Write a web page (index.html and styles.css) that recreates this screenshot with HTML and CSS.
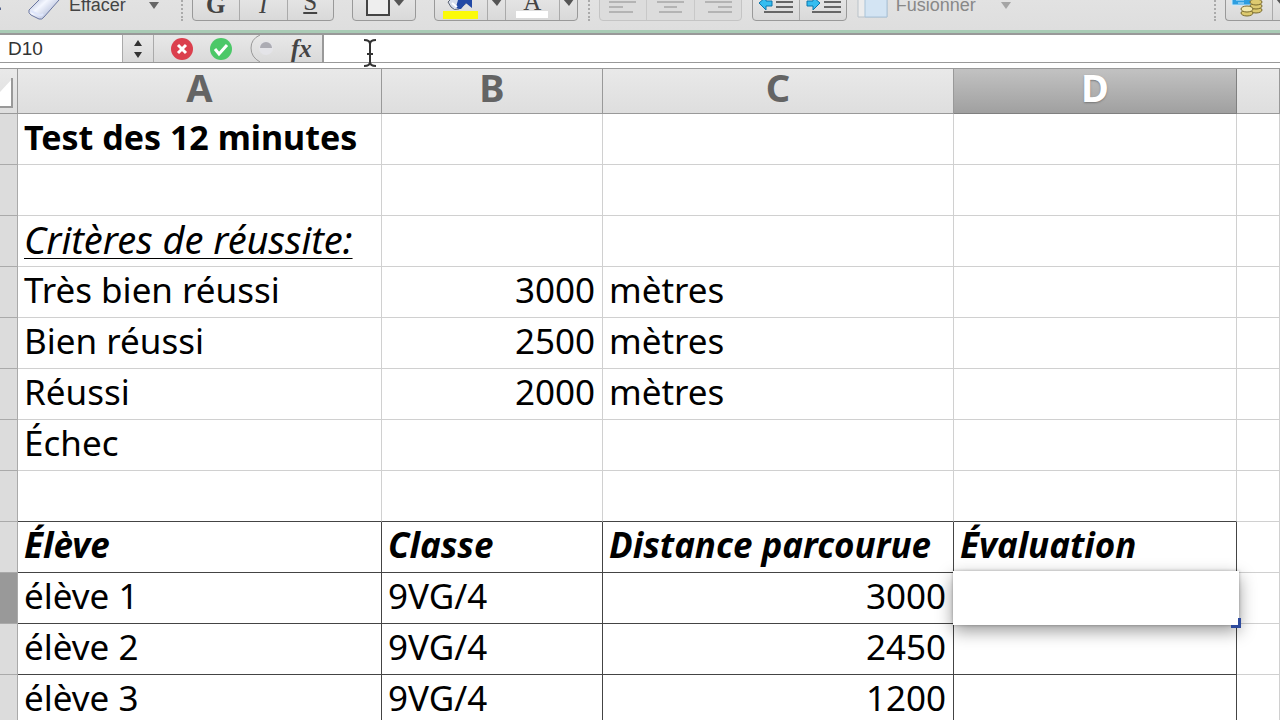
FILE: index.html
```html
<!DOCTYPE html>
<html lang="fr">
<head>
    <meta charset="UTF-8">
    <meta name="viewport" content="width=device-width, initial-scale=1.0">
    <title>Test des 12 minutes</title>
    <link rel="stylesheet" href="styles.css">
</head>
<body>

    <!-- Toolbar -->
    <div class="toolbar">
        <button class="tool clear" type="button">
            <svg width="64" height="32" viewBox="0 -11 64 32">
                <defs>
                    <linearGradient id="eraser" x1="0" y1="0" x2="1" y2="1">
                        <stop offset="0" stop-color="#8794bd"/>
                        <stop offset="0.45" stop-color="#f4f7ff"/>
                        <stop offset="1" stop-color="#8f9cc4"/>
                    </linearGradient>
                </defs>
                <path d="M0 7l1 1v2H0z" fill="#56648e"/>
                <path d="M29 10L46-7q3-3 7 0l6 3q2 2 0 4L44 17q-2 3-5 2l-8-4q-3-2-2-5z" fill="url(#eraser)" stroke="#6a76a0"/>
                <path d="M31 11l8 4q2 1 4-1" fill="none" stroke="#dfe6fb" stroke-width="2"/>
            </svg>
            <span>Effacer</span>
            <span class="arrow"></span>
        </button>
        <span class="dots"></span>
        <div class="group">
            <button class="tool letter w-46" type="button"><b>G</b></button>
            <button class="tool letter w-48" type="button"><i>I</i></button>
            <button class="tool letter w-46 underlined" type="button"><u>S</u></button>
        </div>
        <div class="group borders">
            <button class="tool" type="button" aria-label="Bordures">
                <svg width="62" height="32" viewBox="0 -11 62 32">
                    <path d="M14-9h22v24H14z" fill="#eee" stroke="#444" stroke-width="2"/>
                    <path d="M41 0h10l-5 6z" fill="#555"/>
                </svg>
            </button>
        </div>
        <div class="group colors">
            <button class="tool" type="button" aria-label="Remplissage">
                <svg width="52" height="32" viewBox="0 -11 52 32">
                    <path d="M13 2l10-10 11 9-10 8q-5 2-8-2z" fill="#d5dceb" stroke="#5d6574"/>
                    <path d="M23 0l5-8q9 2 9 7v9q-5-4-6-5l-5 6q-4 0-5-2z" fill="#2249a6"/>
                    <path d="M17 3l5 4" stroke="#fff" stroke-width="2"/>
                    <path d="M8 11h35v8H8z" fill="#fbfa0a"/>
                </svg>
            </button>
            <button class="tool" type="button" aria-label="Choisir le remplissage">
                <svg width="17" height="32" viewBox="0 -11 17 32"><path d="M3-1h11L9 6z" fill="#555"/></svg>
            </button>
            <button class="tool letter w-54 font-color" type="button">A</button>
            <button class="tool" type="button" aria-label="Choisir la couleur">
                <svg width="17" height="32" viewBox="0 -11 17 32"><path d="M3-1h11L9 6z" fill="#555"/></svg>
            </button>
        </div>
        <span class="dots"></span>
        <div class="group pale">
            <button class="tool" type="button" aria-label="Gauche">
                <svg width="46" height="32" viewBox="0 -11 46 32"><path d="M9 2h27M9 7h14M9 12h24" stroke="#b4b4b4" stroke-width="2"/></svg>
            </button>
            <button class="tool" type="button" aria-label="Centrer">
                <svg width="47" height="32" viewBox="0 -11 47 32"><path d="M10 2h27M17 7h13M12 12h23" stroke="#b4b4b4" stroke-width="2"/></svg>
            </button>
            <button class="tool" type="button" aria-label="Droite">
                <svg width="46" height="32" viewBox="0 -11 46 32"><path d="M10 2h27M23 7h14M13 12h24" stroke="#b4b4b4" stroke-width="2"/></svg>
            </button>
        </div>
        <div class="group">
            <button class="tool" type="button" aria-label="Diminuer le retrait">
                <svg width="46" height="32" viewBox="0 -11 46 32">
                    <path d="M23 2h17M23 7h17M11 12h29" stroke="#666" stroke-width="2"/>
                    <path d="M6 3l7-6v4h6v5h-6v4z" fill="#35bdf0" stroke="#0b76ad"/>
                </svg>
            </button>
            <button class="tool" type="button" aria-label="Augmenter le retrait">
                <svg width="46" height="32" viewBox="0 -11 46 32">
                    <path d="M24 2h17M24 7h17M12 12h29" stroke="#666" stroke-width="2"/>
                    <path d="M20 3l-7-6v4H7v5h6v4z" fill="#35bdf0" stroke="#0b76ad"/>
                </svg>
            </button>
        </div>
        <button class="tool merge" type="button">
            <svg width="32" height="32" viewBox="0 -11 32 32">
                <path d="M1-8h29v25H1z" fill="#ececec" stroke="#b9c2c9"/>
                <path d="M8-8h22v25H8z" fill="#d3e4f3" stroke="#a9c3d8"/>
            </svg>
            <span>Fusionner</span>
            <span class="arrow"></span>
        </button>
        <span class="dots last"></span>
        <div class="group currency">
            <button class="tool" type="button" aria-label="Devise">
                <svg width="46" height="32" viewBox="0 -11 46 32">
                    <path d="M6-5h19V5H6z" fill="#2d9ee0" stroke="#c9ebff"/>
                    <path d="M10 0h8M12 3h6" stroke="#c9ebff"/>
                    <g fill="#ddca70" stroke="#77692c">
                        <ellipse cx="30" cy="10" rx="6" ry="3"/>
                        <ellipse cx="30" cy="6" rx="6" ry="3"/>
                        <ellipse cx="30" cy="2" rx="6" ry="3"/>
                        <ellipse cx="21" cy="13" rx="6" ry="3"/>
                        <ellipse cx="21" cy="9" rx="6" ry="3" fill="#f3e9ae"/>
                    </g>
                </svg>
            </button>
            <button class="tool" type="button" aria-label="Choisir la devise">
                <svg width="7" height="32" viewBox="0 -11 7 32"><path d="M3-1h11L9 6z" fill="#555"/></svg>
            </button>
        </div>
    </div>

    <!-- Formula bar -->
    <div class="formula-bar">
        <input class="name-box" type="text" value="D10" aria-label="Zone Nom">
        <button class="stepper" type="button" aria-label="Noms">
            <svg width="10" height="20" viewBox="0 0 10 20"><path d="M5 1l4 6H1zM5 19l4-6H1z" fill="#333"/></svg>
        </button>
        <div class="formula-tools">
            <button type="button" aria-label="Annuler">
                <svg width="24" height="24" viewBox="0 0 24 24">
                    <circle cx="12" cy="12" r="11" fill="#db3f4d"/>
                    <path d="M8 8l8 8M16 8l-8 8" stroke="#fff" stroke-width="3"/>
                </svg>
            </button>
            <button type="button" aria-label="Valider">
                <svg width="24" height="24" viewBox="0 0 24 24">
                    <circle cx="12" cy="12" r="11" fill="#4cc868"/>
                    <path d="M6 12l4 5 8-9" fill="none" stroke="#fff" stroke-width="3"/>
                </svg>
            </button>
            <button type="button" aria-label="Options">
                <svg width="28" height="27" viewBox="0 0 28 27">
                    <path d="M12 0Q3 4 3 13T12 27" fill="none" stroke="#999"/>
                    <circle cx="18" cy="13" r="7" fill="#e4e4e8"/>
                    <path d="M12 13a6 6 0 0 1 12 0z" fill="#acacb3"/>
                </svg>
            </button>
            <button class="fx" type="button">fx</button>
        </div>
        <input class="formula" type="text" aria-label="Formule">
        <svg class="pointer" width="14" height="28" viewBox="0 0 14 28">
            <path d="M1 1q6 0 6 4v18q0 4-6 4M13 1q-6 0-6 4M7 23q0 4 6 4M4 15h6" fill="none" stroke="#333" stroke-width="2"/>
        </svg>
    </div>

    <!-- Sheet -->
    <table class="sheet">
        <colgroup>
            <col class="col-num">
            <col class="col-a">
            <col class="col-b">
            <col class="col-c">
            <col class="col-d">
            <col>
        </colgroup>
        <thead>
            <tr>
                <th class="corner"><svg width="14" height="36" viewBox="0 0 14 36"><path d="M0 19L12 6v29H0z" fill="#fff"/><path d="M12 5v29H0" fill="none" stroke="#999" stroke-width="2"/></svg></th>
                <th>A</th>
                <th>B</th>
                <th>C</th>
                <th class="active">D</th>
                <th></th>
            </tr>
        </thead>
        <tbody>
            <tr><th></th><td class="bold">Test des 12 minutes</td><td></td><td></td><td></td><td></td></tr>
            <tr><th></th><td></td><td></td><td></td><td></td><td></td></tr>
            <tr><th></th><td class="criteria">Critères de réussite:</td><td></td><td></td><td></td><td></td></tr>
            <tr><th></th><td>Très bien réussi</td><td class="num">3000</td><td>mètres</td><td></td><td></td></tr>
            <tr><th></th><td>Bien réussi</td><td class="num">2500</td><td>mètres</td><td></td><td></td></tr>
            <tr><th></th><td>Réussi</td><td class="num">2000</td><td>mètres</td><td></td><td></td></tr>
            <tr><th></th><td>Échec</td><td></td><td></td><td></td><td></td></tr>
            <tr class="before-list"><th></th><td></td><td></td><td></td><td></td><td></td></tr>
            <tr class="list titles"><th></th><td>Élève</td><td>Classe</td><td>Distance parcourue</td><td>Évaluation</td><td></td></tr>
            <tr class="list">
                <th class="active"></th><td>élève 1</td><td>9VG/4</td><td class="num">3000</td>
                <td class="editing"><input class="editor" type="text" aria-label="D10"><span class="handle"></span></td><td></td>
            </tr>
            <tr class="list"><th></th><td>élève 2</td><td>9VG/4</td><td class="num">2450</td><td></td><td></td></tr>
            <tr class="list"><th></th><td>élève 3</td><td>9VG/4</td><td class="num">1200</td><td></td><td></td></tr>
        </tbody>
    </table>

</body>
</html>
```
FILE: styles.css
```css
* {
    box-sizing: border-box;
}
body {
    margin: 0;
    height: 100vh;
    overflow: hidden;
    background: #fff;
    font-family: "Liberation Sans", Arial, sans-serif;
}
button {
    margin: 0;
    padding: 0;
    border: 0;
    background: none;
    font-family: inherit;
    color: #444;
}
svg {
    display: block;
    flex: none;
}

/* Toolbar */
.toolbar {
    display: flex;
    align-items: flex-end;
    height: 33px;
    padding-bottom: 9px;
    overflow: hidden;
    background: linear-gradient(#e2e2e2, #dedede);
    border-bottom: 3px solid #a9cbb5;
}
.tool {
    display: flex;
    flex: none;
    align-items: center;
    justify-content: center;
    height: 32px;
    font-size: 18px;
    line-height: 32px;
}
.clear {
    gap: 5px;
}
.merge {
    gap: 7px;
    color: #888;
}
.arrow {
    margin-left: 18px;
    border: 5px solid transparent;
    border-top: 7px solid #666;
    border-bottom: 0;
}
.merge .arrow {
    border-top-color: #a5a5a5;
}
.dots {
    flex: none;
    height: 32px;
    margin: 0 9px 0 22px;
    border-left: 2px dotted #aaa;
}
.colors + .dots {
    margin-left: 0;
}
.dots.last {
    margin-left: auto;
}
.group {
    display: flex;
    flex: none;
    height: 32px;
    margin-right: 10px;
    overflow: hidden;
    background: linear-gradient(#e9e9e9, #d9d9d9);
    border: 1px solid #999;
    border-radius: 4px;
}
.group .tool + .tool {
    border-left: 1px solid #aaa;
}
.group .tool {
    height: 30px;
}
.borders {
    margin: 0 18px 0 8px;
}
.pale {
    background: #dcdcdc;
    border-color: #c4c4c4;
}
.pale .tool + .tool {
    border-color: #c8c8c8;
}
.currency {
    margin-right: 0;
    border-right: 0;
    border-radius: 4px 0 0 4px;
}
.letter {
    font-family: "Liberation Serif", serif;
    font-size: 25px;
}
.w-46 {
    width: 46px;
}
.w-48 {
    width: 48px;
}
.w-54 {
    width: 54px;
}
.underlined,
.font-color {
    padding-bottom: 6px;
}
.font-color {
    background: linear-gradient(#fff, #fff) center bottom 2px / 32px 7px no-repeat;
}

/* Formula bar */
.formula-bar {
    position: relative;
    display: flex;
    height: 30px;
    background: linear-gradient(#e8e8e8, #dadada);
    border-top: 2px solid #999;
    border-bottom: 1px solid #999;
}
.formula-bar input {
    padding: 0 8px;
    border: 0;
    border-radius: 0;
    background: #fff;
    font-family: inherit;
    font-size: 19px;
    color: #333;
    outline: none;
}
.name-box {
    width: 122px;
}
.stepper {
    display: flex;
    align-items: center;
    justify-content: center;
    width: 32px;
    border: solid #aaa;
    border-width: 0 1px;
}
.formula-tools {
    display: flex;
    align-items: center;
    gap: 15px;
    width: 170px;
    padding-left: 16px;
    border-right: 2px solid #999;
}
.formula-tools .fx {
    font-family: "Liberation Serif", serif;
    font-size: 25px;
    font-style: italic;
    font-weight: bold;
    line-height: 27px;
}
.formula {
    flex: 1;
}
.pointer {
    position: absolute;
    left: 363px;
    top: 4px;
}

/* Sheet */
.sheet {
    width: 100%;
    margin-top: 5px;
    table-layout: fixed;
    border-spacing: 0;
    border-top: 1px solid #999;
    font-family: "Noto Sans", sans-serif;
    font-size: 35px;
    line-height: 40px;
    color: #000;
}
.col-num {
    width: 18px;
}
.col-a {
    width: 364px;
}
.col-b {
    width: 221px;
}
.col-c {
    width: 351px;
}
.col-d {
    width: 283px;
}
.sheet th,
.sheet td {
    height: 51px;
    padding: 0 7px 4px 6px;
    border: solid #d0d0d0;
    border-width: 0 1px 1px 0;
    text-align: left;
    white-space: nowrap;
}
.sheet thead th {
    height: 45px;
    padding: 0 0 8px;
    background: linear-gradient(#e9e9e9, #dedede);
    border-color: #999;
    font-size: 38px;
    line-height: 35px;
    text-align: center;
    color: #646464;
}
.sheet thead .corner {
    padding: 0;
}
.sheet thead .active {
    background: linear-gradient(#c2c2c2, #a0a0a0);
    border-color: #808080;
    color: #fff;
    text-shadow: 0 1px 2px #777;
}
.sheet tbody th {
    background: #dcdcdc;
    border-color: #aaa;
}
.sheet tbody .active {
    background: #999;
}
.sheet .num {
    text-align: right;
}
.bold {
    font-size: 34px;
    font-weight: bold;
}
.criteria {
    font-size: 38px;
    font-style: italic;
    text-decoration: underline 1px;
    text-underline-offset: 4px;
    text-decoration-skip-ink: none;
}
.titles td {
    font-weight: bold;
    font-style: italic;
}
.before-list td:not(:last-child) {
    border-bottom-color: #444;
}
.list td:not(:last-child) {
    border-color: #444;
}

/* Cell being edited, lifted over its neighbours */
.sheet .editing {
    position: relative;
}
.editor {
    position: absolute;
    left: -1px;
    top: -2px;
    width: 286px;
    height: 54px;
    padding: 0 7px;
    border: 0;
    background: #fff;
    box-shadow: 0 6px 16px rgba(0, 0, 0, 0.4), 0 0 3px rgba(0, 0, 0, 0.3);
    font: inherit;
    outline: none;
}
.handle {
    position: absolute;
    right: -5px;
    bottom: -5px;
    width: 10px;
    height: 10px;
    border: solid #2e4a9c;
    border-width: 0 3px 3px 0;
}
```
